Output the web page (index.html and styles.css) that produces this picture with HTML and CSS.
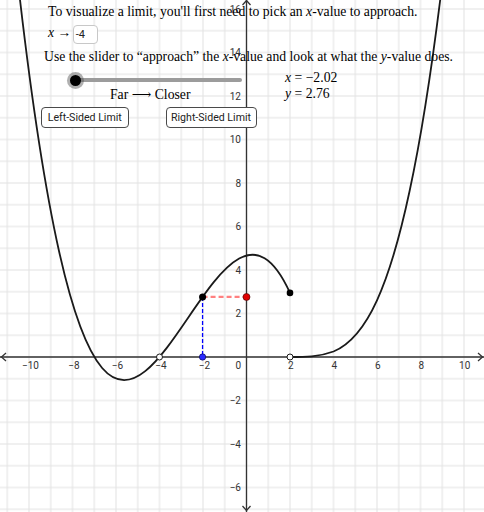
FILE: index.html
```html
<!DOCTYPE html>
<html>
<head>
<meta charset="utf-8">
<link rel="stylesheet" href="styles.css">
</head>
<body>
<div class="applet">
  <svg class="graph" width="484" height="512" viewBox="0 0 484 512">
    <defs>
      <pattern id="grid" width="21.75" height="21.75" patternUnits="userSpaceOnUse" x="-3.625" y="-1.875">
        <path class="gridline" d="M10.875 0V21.75M0 10.875H21.75"/>
      </pattern>
    </defs>
    <rect width="484" height="512" fill="url(#grid)"/>
    <path class="axis" d="M0 357H484M246.5 0V512"/>
    <path class="axis" d="M6 353L1.5 357L6 361M478 353L482.5 357L478 361M242.5 506L246.5 510.5L250.5 506M242.5 5L246.5 0.5L250.5 5"/>
    <g class="xlabels">
      <text x="30.5" y="368.5">−10</text>
      <text x="74" y="368.5">−8</text>
      <text x="117.5" y="368.5">−6</text>
      <text x="161" y="368.5">−4</text>
      <text x="204.5" y="368.5">−2</text>
      <text x="290.7" y="368.5">2</text>
      <text x="334.2" y="368.5">4</text>
      <text x="377.7" y="368.5">6</text>
      <text x="421.2" y="368.5">8</text>
      <text x="464.7" y="368.5">10</text>
    </g>
    <g class="ylabels">
      <text x="241" y="12.5">16</text>
      <text x="241" y="56">14</text>
      <text x="241" y="99.5">12</text>
      <text x="241" y="143">10</text>
      <text x="241" y="186.5">8</text>
      <text x="241" y="230">6</text>
      <text x="241" y="273.5">4</text>
      <text x="241" y="317">2</text>
      <text x="241" y="368.5">0</text>
      <text x="241" y="404">−2</text>
      <text x="241" y="447.5">−4</text>
      <text x="241" y="491">−6</text>
    </g>
    <path class="curve" d="M15.95 -36.02C107.3 793.74 198.65 91.45 290 292.88"/>
    <path class="curve" d="M290 357C304.5 357 319 357 333.5 351.51C348 345.35 362.5 332.14 377 300.28C387.9 276.38 398.75 241.89 409.6 191.05C422 133.43 434.3 55 446.6 -54.1"/>
    <path class="dash-red" d="M202.57 296.97H246.5"/>
    <path class="dash-blue" d="M202.57 296.97V357"/>
    <circle class="hole" cx="159.5" cy="357" r="3"/>
    <circle class="hole" cx="290" cy="357" r="3"/>
    <circle class="pt-black" cx="290" cy="292.88" r="3.3"/>
    <circle class="pt-black" cx="202.57" cy="296.97" r="3.5"/>
    <circle class="pt-red" cx="246.5" cy="296.97" r="3.5"/>
    <circle class="pt-blue" cx="202.57" cy="357" r="3.2"/>
  </svg>

  <div class="panel">
    <p class="line line1">To visualize a limit, you'll first need to pick an <i>x</i>-value to approach.</p>
    <div class="xrow">
      <span class="math"><i>x</i> →</span>
      <span class="inputbox">-4</span>
    </div>
    <p class="line line3">Use the slider to “approach” the <i>x</i>-value and look at what the <i>y</i>-value does.</p>
    <div class="sliderarea">
      <div class="sliderleft">
        <div class="slider"><span class="thumb"></span></div>
        <p class="line farcloser">Far ⟶ Closer</p>
      </div>
      <div class="readout">
        <p class="rline"><i>x</i> = −2.02</p>
        <p class="rline"><i>y</i> = 2.76</p>
      </div>
    </div>
    <div class="buttons">
      <button class="btn btn-left">Left-Sided Limit</button>
      <button class="btn btn-right">Right-Sided Limit</button>
    </div>
  </div>
</div>
</body>
</html>
```
FILE: styles.css
```css
html, body {
  margin: 0;
  padding: 0;
  background: #ffffff;
}

.applet {
  position: relative;
  width: 484px;
  height: 512px;
  overflow: hidden;
  background: #ffffff;
}

.graph {
  display: block;
}

.gridline {
  stroke: #e2e2e2;
  stroke-width: 1;
  fill: none;
}

.axis {
  stroke: #333333;
  stroke-width: 1.3;
  fill: none;
}

.xlabels text,
.ylabels text {
  font-family: Roboto, "Liberation Sans", sans-serif;
  font-size: 10px;
  fill: #333333;
}

.xlabels text {
  text-anchor: middle;
}

.ylabels text {
  text-anchor: end;
}

.curve {
  stroke: #1a1a1a;
  stroke-width: 1.8;
  fill: none;
}

.dash-red {
  stroke: #ff8080;
  stroke-width: 2.2;
  stroke-dasharray: 5 3;
  fill: none;
}

.dash-blue {
  stroke: #0000ff;
  stroke-width: 1.3;
  stroke-dasharray: 4 2;
  fill: none;
}

.hole {
  fill: #ffffff;
  stroke: #1a1a1a;
  stroke-width: 1;
}

.pt-black {
  fill: #000000;
}

.pt-red {
  fill: #e00000;
  stroke: #400000;
  stroke-width: 0.6;
}

.pt-blue {
  fill: #2a2aff;
  stroke: #000040;
  stroke-width: 0.6;
}

/* overlay panel with the applet's texts and controls */
.panel {
  position: absolute;
  left: 0;
  top: 0;
  width: 484px;
  display: flex;
  flex-direction: column;
  font-family: "Liberation Serif", "DejaVu Serif", serif;
  font-size: 13.7px;
  color: #000000;
}

.line {
  margin: 0;
  white-space: nowrap;
  line-height: 20px;
}

.line1 {
  padding: 2px 0 0 48px;
}

.xrow {
  margin-top: 3px;
  height: 19px;
  display: flex;
  align-items: flex-start;
  padding-left: 48px;
}

.math {
  width: 24.7px;
  line-height: 15px;
  white-space: nowrap;
}

.inputbox {
  box-sizing: border-box;
  width: 25px;
  height: 19px;
  border: 1px solid #c8c8c8;
  border-radius: 4px;
  font-family: Roboto, "Liberation Sans", sans-serif;
  font-size: 11px;
  line-height: 17px;
  padding-left: 2px;
  color: #222222;
  background: #ffffff;
}

.line3 {
  padding: 3px 0 0 44px;
}

.sliderarea {
  height: 40px;
  display: grid;
  grid-template-columns: 285px auto;
}

.sliderleft {
  display: flex;
  flex-direction: column;
}

.slider {
  position: relative;
  margin: 11px 0 0 75px;
  width: 167px;
  height: 4px;
  border-radius: 2px;
  background: #9c9c9c;
}

.thumb {
  position: absolute;
  left: -5px;
  top: -3.5px;
  width: 11px;
  height: 11px;
  border-radius: 50%;
  background: #000000;
  box-shadow: 0 0 0 3px rgba(80, 80, 80, 0.45);
}

.farcloser {
  margin-top: 3.4px;
  padding-left: 110px;
}

.readout {
  padding-top: 3.4px;
}

.rline {
  margin: 0;
  line-height: 16px;
  white-space: nowrap;
}

.buttons {
  display: flex;
  gap: 37px;
  padding-left: 41px;
}

.btn {
  box-sizing: border-box;
  height: 20.5px;
  margin: 0;
  padding: 0;
  border: 1px solid #4a4a4a;
  border-radius: 4px;
  background: #ffffff;
  font-family: Roboto, "Liberation Sans", sans-serif;
  font-size: 10.6px;
  font-weight: 400;
  color: #222222;
  text-align: center;
  white-space: nowrap;
}

.btn-left {
  width: 87.5px;
}

.btn-right {
  width: 91px;
}
```
